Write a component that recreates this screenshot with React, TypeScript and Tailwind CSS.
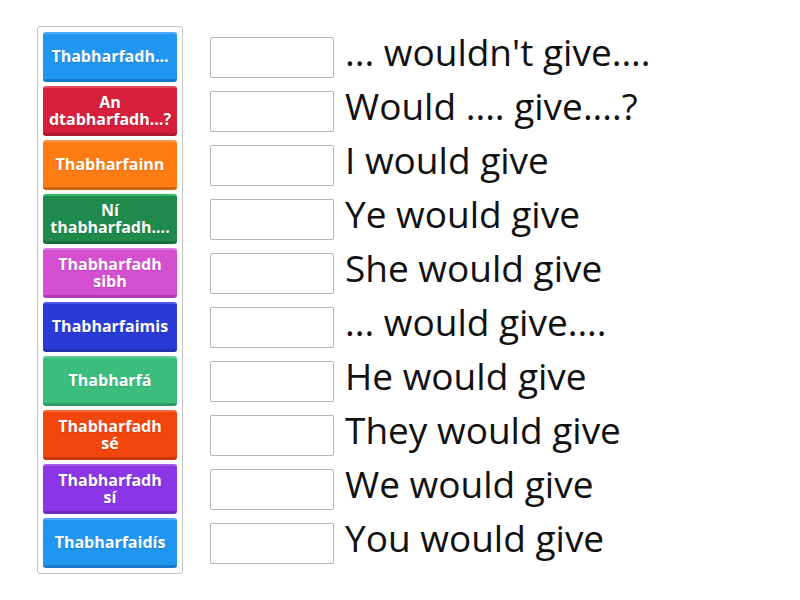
const tiles = [
  { lines: ["Thabharfadh..."], bg: "bg-[#2196f0]", top: "border-t-[#4aaaf5]", bottom: "border-b-[#1a78c8]" },
  { lines: ["An", "dtabharfadh...?"], bg: "bg-[#d61f3b]", top: "border-t-[#e04a60]", bottom: "border-b-[#ad1830]" },
  { lines: ["Thabharfainn"], bg: "bg-[#ff7b14]", top: "border-t-[#ff9540]", bottom: "border-b-[#d2640e]" },
  { lines: ["Ní", "thabharfadh...."], bg: "bg-[#1f8a4c]", top: "border-t-[#2bbf63]", bottom: "border-b-[#186e3c]" },
  { lines: ["Thabharfadh", "sibh"], bg: "bg-[#d54fd1]", top: "border-t-[#e07ade]", bottom: "border-b-[#b23cae]" },
  { lines: ["Thabharfaimis"], bg: "bg-[#2a3ad6]", top: "border-t-[#4a5ae0]", bottom: "border-b-[#2230ad]" },
  { lines: ["Thabharfá"], bg: "bg-[#3bbd7c]", top: "border-t-[#60cb95]", bottom: "border-b-[#2f9a64]" },
  { lines: ["Thabharfadh", "sé"], bg: "bg-[#f2460d]", top: "border-t-[#f56a3a]", bottom: "border-b-[#c6380a]" },
  { lines: ["Thabharfadh", "sí"], bg: "bg-[#8a35e6]", top: "border-t-[#a05cec]", bottom: "border-b-[#6e2ab9]" },
  { lines: ["Thabharfaidís"], bg: "bg-[#2196f0]", top: "border-t-[#4aaaf5]", bottom: "border-b-[#1a78c8]" },
];

const answers = [
  "... wouldn't give....",
  "Would .... give....?",
  "I would give",
  "Ye would give",
  "She would give",
  "... would give....",
  "He would give",
  "They would give",
  "We would give",
  "You would give",
];

export default function App() {
  return (
    <div className="w-[800px] h-[600px] bg-white flex items-start pt-[26px] pl-[37px] font-['Open_Sans',sans-serif]">
      <div className="w-[146px] border border-[#c4c4c4] rounded-[3px] p-[5px] flex flex-col gap-[4px]">
        {tiles.map((t) => (
          <div
            key={t.lines.join(" ")}
            className={`${t.bg} ${t.top} ${t.bottom} h-[50px] rounded-[3px] border-t-2 border-b-[3px] flex items-center justify-center text-center text-white font-bold text-[16px] leading-[17px] whitespace-nowrap [text-shadow:0_1px_1px_rgba(0,0,0,0.15)]`}
          >
            <p>
              {t.lines[0]}
              {t.lines[1] && (
                <>
                  <br />
                  {t.lines[1]}
                </>
              )}
            </p>
          </div>
        ))}
      </div>
      <div className="ml-[27px] pt-[6px] flex flex-col gap-[4px]">
        {answers.map((a) => (
          <div key={a} className="h-[50px] flex items-center gap-[11px]">
            <div className="w-[124px] h-[41px] border border-[#b4b4b4] rounded-[2px] bg-white shrink-0" />
            <span className="self-start mt-[1px] text-[37px] text-[#111] leading-none whitespace-nowrap">{a}</span>
          </div>
        ))}
      </div>
    </div>
  );
}
